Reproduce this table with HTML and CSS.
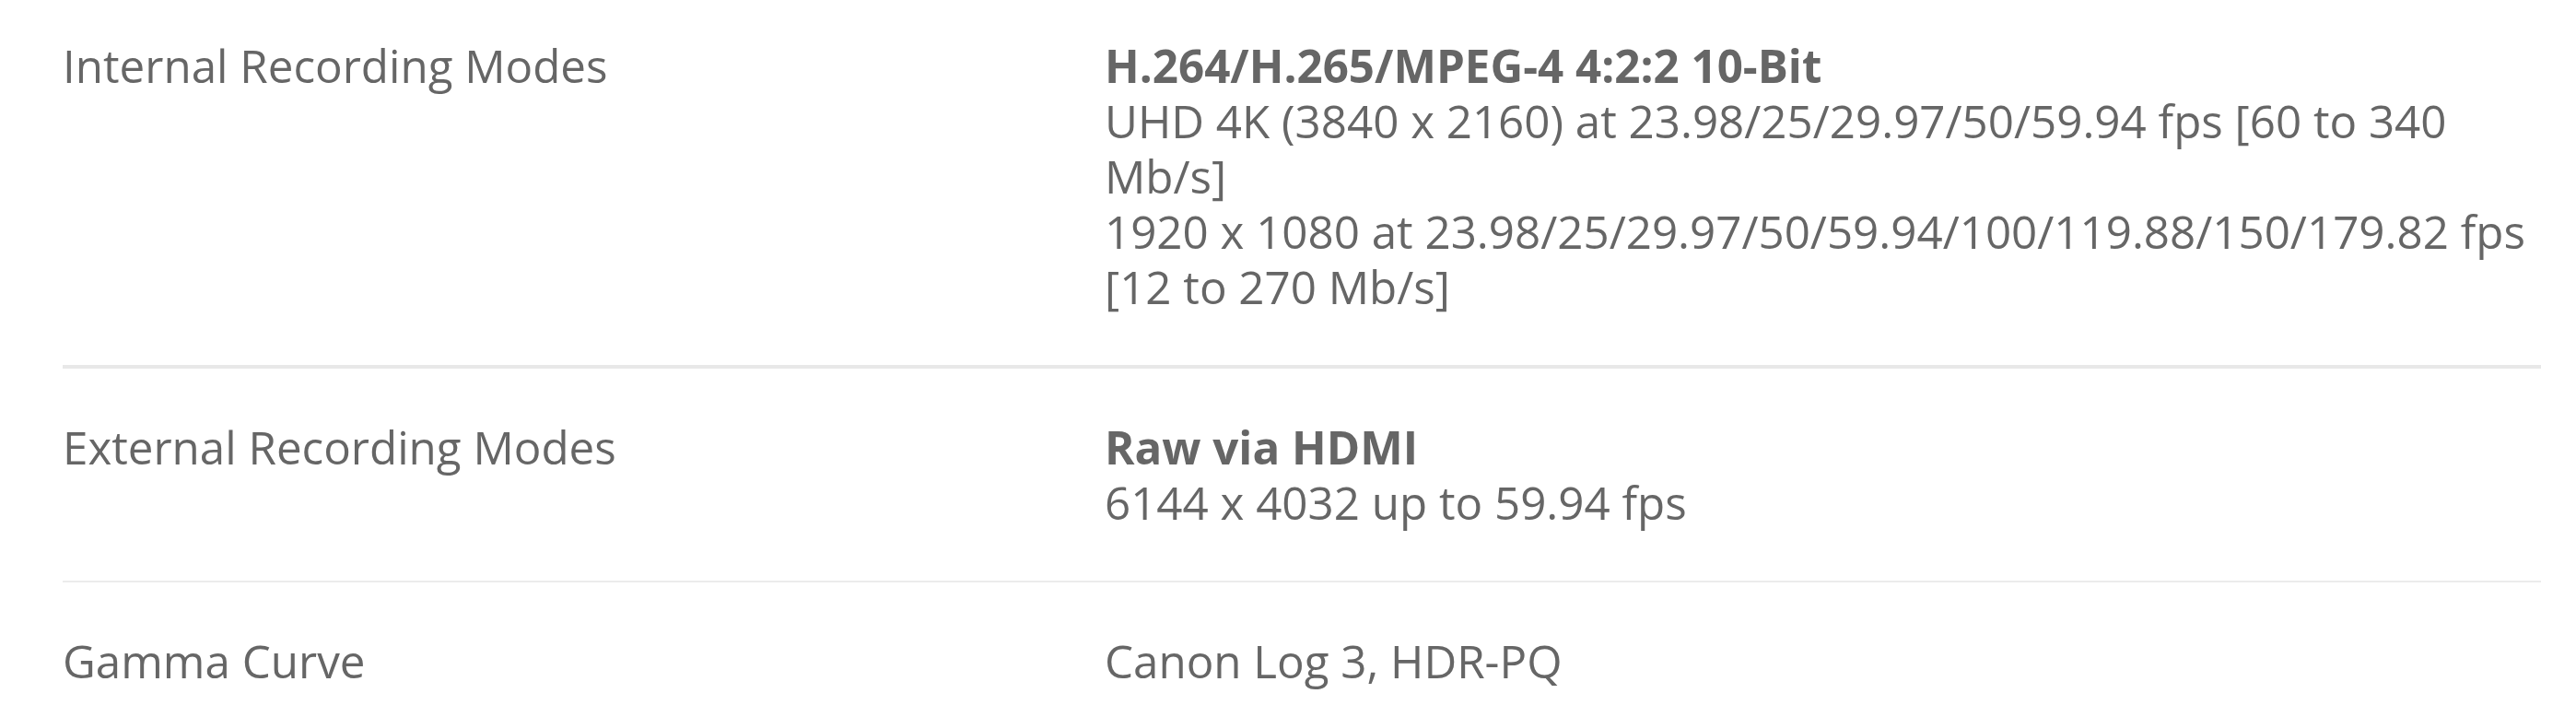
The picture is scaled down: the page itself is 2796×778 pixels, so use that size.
FILE: index.html
```html
<!DOCTYPE html>
<html lang="en">
<head>
<meta charset="utf-8">
<title>Specifications</title>
<link rel="stylesheet" href="styles.css">
</head>
<body>
<section class="specs">
  <div class="spec-row">
    <div class="spec-label">Internal Recording Modes</div>
    <div class="spec-value">
      <strong>H.264/H.265/MPEG-4 4:2:2 10-Bit</strong><br>
      UHD 4K (3840 x 2160) at 23.98/25/29.97/50/59.94 fps [60 to 340 Mb/s]<br>
      1920 x 1080 at 23.98/25/29.97/50/59.94/100/119.88/150/179.82 fps [12 to 270 Mb/s]
    </div>
  </div>
  <div class="spec-row spec-row--thin">
    <div class="spec-label">External Recording Modes</div>
    <div class="spec-value">
      <strong>Raw via HDMI</strong><br>
      6144 x 4032 up to 59.94 fps
    </div>
  </div>
  <div class="spec-row spec-row--last">
    <div class="spec-label">Gamma Curve</div>
    <div class="spec-value">Canon Log 3, HDR-PQ</div>
  </div>
</section>
</body>
</html>
```
FILE: styles.css
```css
html, body {
  margin: 0;
  padding: 0;
  background: #ffffff;
}

body {
  font-family: "Open Sans", "Liberation Sans", sans-serif;
  color: #666666;
  font-size: 49.3px;
  line-height: 60px;
}

.specs {
  margin: 0 38px 0 68px;
}

.spec-row {
  display: grid;
  grid-template-columns: 1131px 1fr;
  padding: 55px 0 55px;
  border-bottom: 4px solid #e8e8e8;
}

.spec-row:first-child {
  padding-top: 41px;
}

.spec-row--thin {
  border-bottom: 2px solid #ececec;
}

.spec-row--last {
  padding-top: 55px;
  border-bottom: none;
}

.spec-label {
  font-weight: 400;
}

.spec-value strong {
  font-weight: 700;
}
```
